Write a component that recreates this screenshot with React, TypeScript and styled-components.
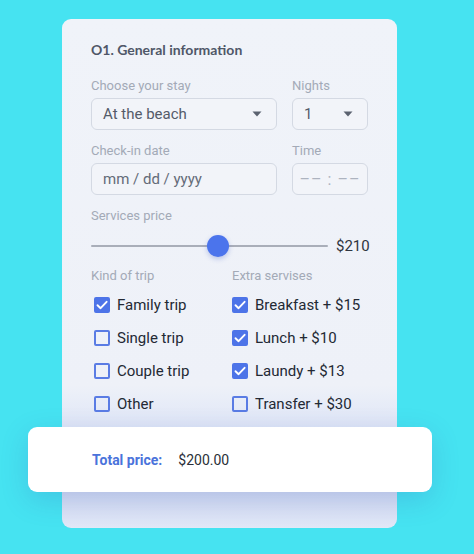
import React from "react";
import styled, { createGlobalStyle } from "styled-components";

const GlobalStyle = createGlobalStyle`
  html, body {
    margin: 0;
    padding: 0;
    background: #46e3f1;
  }
  body {
    font-family: Roboto, "Liberation Sans", sans-serif;
    -webkit-font-smoothing: antialiased;
  }
`;

const kinds = [
  { label: "Family trip", checked: true },
  { label: "Single trip", checked: false },
  { label: "Couple trip", checked: false },
  { label: "Other", checked: false },
];

const extras = [
  { label: "Breakfast + $15", checked: true },
  { label: "Lunch + $10", checked: true },
  { label: "Laundy + $13", checked: true },
  { label: "Transfer + $30", checked: false },
];

const Caret = () => (
  <svg width="10" height="6" viewBox="0 0 10 6">
    <path d="M0.5 0.5 H9.5 L5 5.5 Z" fill="#5b6270" />
  </svg>
);

const Check = ({ checked, inset }: { checked: boolean; inset?: boolean }) => (
  <Box $checked={checked} $inset={inset}>
    {checked && (
      <svg width="12" height="10" viewBox="0 0 12 10">
        <path
          d="M1.5 5.2 L4.6 8.2 L10.6 1.8"
          fill="none"
          stroke="#fff"
          strokeWidth="1.9"
          strokeLinecap="round"
          strokeLinejoin="round"
        />
      </svg>
    )}
  </Box>
);

const App = () => {
  const price = 53.6;

  return (
    <>
      <GlobalStyle />
      <Page>
        <Stage>
          <Card>
            <Title>O1. General information</Title>

            <FieldGrid>
              <Field>
                <Label>Choose your stay</Label>
                <Control>
                  <Value>At the beach</Value>
                  <Caret />
                </Control>
              </Field>
              <Field>
                <Label>Nights</Label>
                <Control>
                  <Value>1</Value>
                  <Caret />
                </Control>
              </Field>
              <Field>
                <Label>Check-in date</Label>
                <Control>
                  <Value $muted>mm / dd / yyyy</Value>
                </Control>
              </Field>
              <Field>
                <Label>Time</Label>
                <Control $center>
                  <Placeholder>–– : ––</Placeholder>
                </Control>
              </Field>
            </FieldGrid>

            <Label>Services price</Label>
            <SliderRow>
              <Track>
                <Thumb style={{ left: `${price}%` }} />
              </Track>
              <Amount>$210</Amount>
            </SliderRow>

            <Options>
              <Column>
                <Label>Kind of trip</Label>
                {kinds.map((k) => (
                  <Option key={k.label}>
                    <Check checked={k.checked} inset />
                    <OptionText>{k.label}</OptionText>
                  </Option>
                ))}
              </Column>
              <Column>
                <Label>Extra servises</Label>
                {extras.map((e) => (
                  <Option key={e.label}>
                    <Check checked={e.checked} />
                    <OptionText>{e.label}</OptionText>
                  </Option>
                ))}
              </Column>
            </Options>
          </Card>

          <TotalCard>
            <TotalLabel>Total price:</TotalLabel>
            <TotalValue>$200.00</TotalValue>
          </TotalCard>
        </Stage>
      </Page>
    </>
  );
};

const Page = styled.div`
  width: 474px;
  height: 554px;
  overflow: hidden;
  padding-top: 19px;
  box-sizing: border-box;
`;

const Stage = styled.div`
  position: relative;
  width: 474px;
`;

const Card = styled.div`
  margin-left: 62px;
  width: 335px;
  height: 509px;
  box-sizing: border-box;
  padding: 22px 29px 0;
  border-radius: 9px;
  background: linear-gradient(
    180deg,
    #f0f3f9 0%,
    #eef1f8 72%,
    #dfe6f7 80%,
    #d2dbf3 93%,
    #e2e8f7 100%
  );
  display: flex;
  flex-direction: column;
`;

const Title = styled.div`
  font-family: Lato, "Open Sans", sans-serif;
  font-weight: 700;
  font-size: 14px;
  line-height: 18px;
  color: #4f5768;
  margin-bottom: 19px;
`;

const FieldGrid = styled.div`
  display: grid;
  grid-template-columns: 186px 76px;
  column-gap: 15px;
  row-gap: 13px;
  margin-bottom: 13px;
`;

const Field = styled.div`
  display: flex;
  flex-direction: column;
`;

const Label = styled.div`
  font-size: 13px;
  line-height: 16px;
  color: #a3aab7;
  margin-bottom: 4px;
`;

const Control = styled.div<{ $center?: boolean }>`
  height: 32px;
  box-sizing: border-box;
  border: 1px solid #d4d9e3;
  border-radius: 6px;
  background: #f2f4f9;
  display: flex;
  align-items: center;
  justify-content: ${(p) => (p.$center ? "center" : "space-between")};
  padding: ${(p) => (p.$center ? "0 2px" : "0 14px 0 11px")};
`;

const Value = styled.span<{ $muted?: boolean }>`
  font-size: 15px;
  color: ${(p) => (p.$muted ? "#646b78" : "#545b69")};
`;

const Placeholder = styled.span`
  font-size: 16px;
  letter-spacing: 1px;
  white-space: nowrap;
  color: #adb3bf;
`;

const SliderRow = styled.div`
  height: 24px;
  display: flex;
  align-items: center;
  gap: 8px;
  margin-top: 6px;
  margin-bottom: 10px;
`;

const Track = styled.div`
  position: relative;
  flex-shrink: 0;
  width: 237px;
  height: 2px;
  background: #a9aeb9;
  border-radius: 1px;
`;

const Thumb = styled.div`
  position: absolute;
  top: 50%;
  width: 22px;
  height: 22px;
  margin: -11px 0 0 -11px;
  border-radius: 50%;
  background: #4b74ec;
  box-shadow: 0 2px 5px rgba(60, 90, 200, 0.3);
`;

const Amount = styled.span`
  font-size: 15px;
  white-space: nowrap;
  color: #2f3540;
`;

const Options = styled.div`
  display: grid;
  grid-template-columns: 141px 1fr;
`;

const Column = styled.div`
  display: flex;
  flex-direction: column;
  gap: 13px;

  & > ${Label} {
    margin-bottom: -2px;
  }
`;

const Option = styled.div`
  height: 20px;
  display: flex;
  align-items: center;
`;

const Box = styled.span<{ $checked: boolean; $inset?: boolean }>`
  width: 16px;
  height: 16px;
  box-sizing: border-box;
  margin-left: ${(p) => (p.$inset ? "3px" : "0")};
  margin-right: 7px;
  border-radius: 2px;
  border: 2px solid;
  background: ${(p) => (p.$checked ? "#4d74e8" : "transparent")};
  border-color: ${(p) => (p.$checked ? "#4d74e8" : "#5a7ce4")};
  display: flex;
  align-items: center;
  justify-content: center;
`;

const OptionText = styled.span`
  font-size: 15px;
  color: #232934;
`;

const TotalCard = styled.div`
  position: absolute;
  left: 28px;
  top: 408px;
  width: 404px;
  height: 65px;
  box-sizing: border-box;
  padding-left: 64px;
  border-radius: 9px;
  background: #ffffff;
  box-shadow: 0 8px 28px rgba(50, 80, 170, 0.2);
  display: flex;
  align-items: center;
  gap: 16px;
`;

const TotalLabel = styled.span`
  font-size: 14px;
  font-weight: 700;
  color: #4a73db;
`;

const TotalValue = styled.span`
  font-size: 14px;
  color: #2a2f38;
`;

export default App;
